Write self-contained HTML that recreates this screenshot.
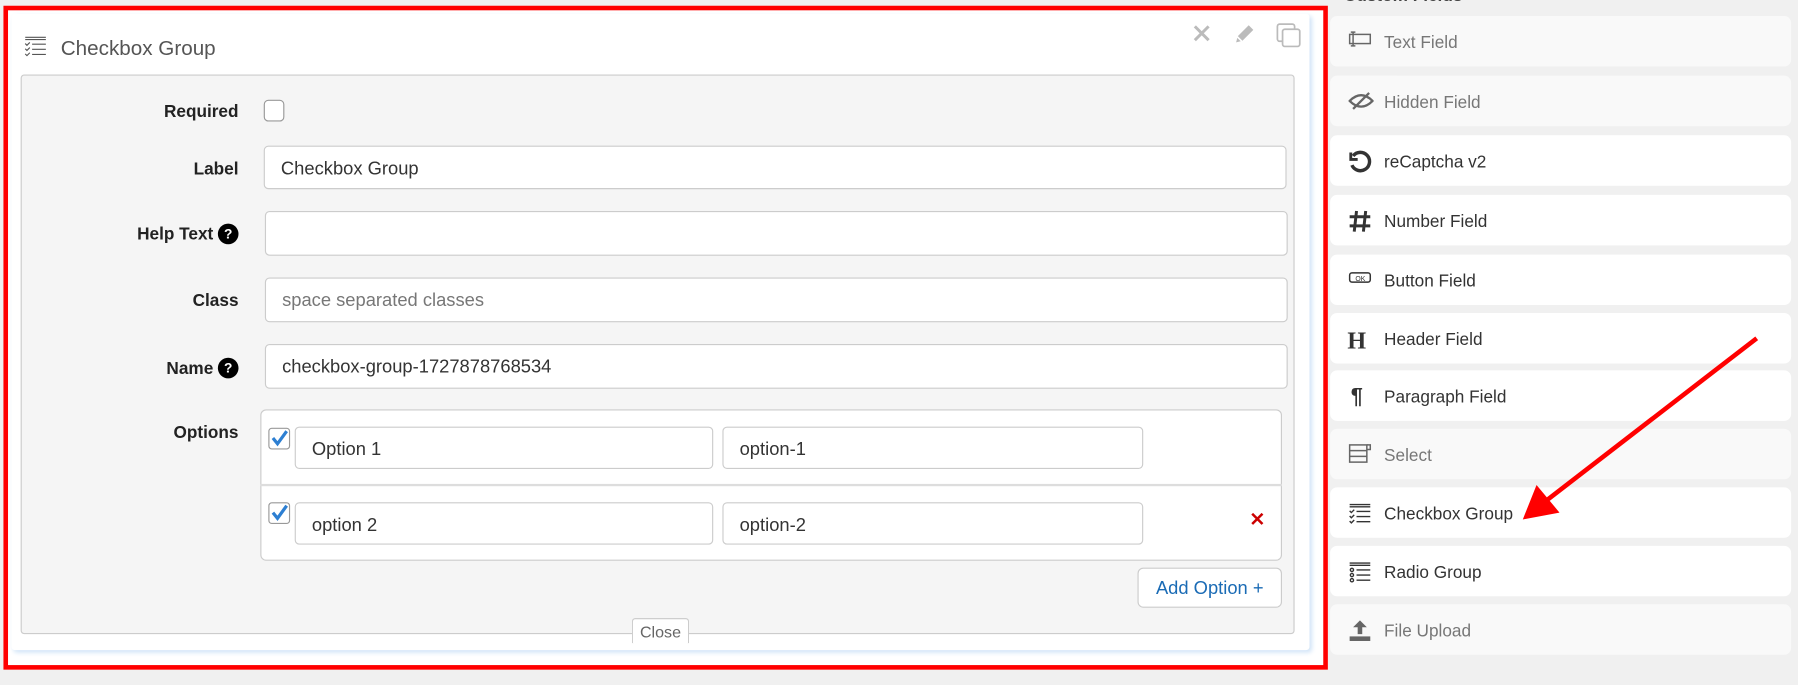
<!DOCTYPE html>
<html><head><meta charset="utf-8"><style>
html,body{margin:0;padding:0;width:1798px;height:685px;overflow:hidden;background:#f0f0f0;font-family:"Liberation Sans","DejaVu Sans",sans-serif}
#w{position:absolute;left:0;top:0;width:1568px;height:597px;transform:scale(1.14668);transform-origin:0 0}
.a{position:absolute}
.red{left:3px;top:5px;width:1147px;height:571px;border:4px solid #f00;background:#fff}
.card{left:10px;top:12px;width:1132px;height:555px;background:#fff;box-shadow:2px 2px 4px #cfe3f7;border-radius:3px}
.panel{left:18px;top:65px;width:1109px;height:486px;background:#f5f5f5;border:1px solid #ccc;border-radius:3px}
.lbl{font-weight:bold;font-size:15px;color:#222;text-align:right;width:190px;left:18px}
.inp{background:#fff;border:1px solid #ccc;border-radius:4px;box-sizing:border-box;font-size:16px;color:#333;padding-left:14px;line-height:39px}
.q{display:inline-block;width:18px;height:18px;border-radius:50%;background:#000;color:#fff;font-size:12px;text-align:center;line-height:18px;vertical-align:1px;margin-left:4px}
.cb{width:17px;height:17px;border:1px solid #999;border-radius:3px;background:#fff;box-sizing:border-box}
.it{left:1160px;width:402px;height:44px;border-radius:6px;background:#fff;font-size:15px;color:#333}
.it.l{background:#f9f9f9;color:#777}
.it span{position:absolute;left:47px;top:2px;line-height:44px}
.it svg{position:absolute;left:16px;top:13px}
</style></head><body><div id="w">
<div class="a" style="left:1172px;top:-12px;font-size:15px;font-weight:bold;color:#444">Custom Fields</div>
<div class="a red"></div>
<div class="a card"></div>
<svg class="a" style="left:21px;top:31px" width="20" height="20" viewBox="0 0 20 20" stroke="#555" fill="none" stroke-width="1"><path d="M1 1.5h18M1 3.5h18M7 7.5h12M7 12h12M7 16.5h12M1 7l1.5 1.5L5 6M1 11.5l1.5 1.5L5 10.5M1 16l1.5 1.5L5 15"/></svg>
<div class="a" style="left:53px;top:32px;font-size:18px;color:#555">Checkbox Group</div>
<svg class="a" style="left:1040px;top:21px" width="16" height="16" viewBox="0 0 16 16" stroke="#bbb" stroke-width="2.6"><path d="M2 2l12 12M14 2L2 14"/></svg>
<svg class="a" style="left:1077px;top:21px" width="17" height="17" viewBox="0 0 17 17" fill="#bbb"><path d="M12 1l4 4-9.5 9.5-4-4zM2 12l3 3-4 1z"/></svg>
<svg class="a" style="left:1113px;top:20px" width="22" height="22" viewBox="0 0 22 22" fill="none" stroke="#bbb" stroke-width="1.5"><rect x="1" y="1" width="15" height="15" rx="2"/><rect x="5.5" y="5.5" width="15" height="15" rx="2" fill="#fff"/></svg>
<div class="a panel"></div>
<div class="a lbl" style="top:89px">Required</div>
<div class="a cb" style="left:230px;top:87px;width:18px;height:19px;border-radius:4px"></div>
<div class="a lbl" style="top:139px">Label</div>
<div class="a inp" style="left:230px;top:127px;width:892px;height:38px">Checkbox Group</div>
<div class="a lbl" style="top:195px">Help Text<span class="q">?</span></div>
<div class="a inp" style="left:231px;top:184px;width:892px;height:39px"></div>
<div class="a lbl" style="top:254px">Class</div>
<div class="a inp" style="left:231px;top:242px;width:892px;height:39px;color:#777">space separated classes</div>
<div class="a lbl" style="top:312px">Name<span class="q">?</span></div>
<div class="a inp" style="left:231px;top:300px;width:892px;height:39px">checkbox-group-1727878768534</div>
<div class="a lbl" style="top:369px">Options</div>
<div class="a" style="left:227px;top:357px;width:891px;height:132px;border:1px solid #ccc;border-radius:5px;background:#fff;box-sizing:border-box"></div>
<div class="a" style="left:227px;top:422px;width:891px;height:2px;background:#ddd"></div>
<div class="a cb" style="left:234px;top:373px;width:19px;height:19px"></div>
<svg class="a" style="left:236px;top:374px" width="16" height="16" viewBox="0 0 16 16" fill="none" stroke="#2d7fd2" stroke-width="2.8"><path d="M2 8l4 5 8-11"/></svg>
<div class="a inp" style="left:257px;top:372px;width:365px;height:37px">Option 1</div>
<div class="a inp" style="left:630px;top:372px;width:367px;height:37px">option-1</div>
<div class="a cb" style="left:234px;top:438px;width:19px;height:19px"></div>
<svg class="a" style="left:236px;top:439px" width="16" height="16" viewBox="0 0 16 16" fill="none" stroke="#2d7fd2" stroke-width="2.8"><path d="M2 8l4 5 8-11"/></svg>
<div class="a inp" style="left:257px;top:438px;width:365px;height:37px">option 2</div>
<div class="a inp" style="left:630px;top:438px;width:367px;height:37px">option-2</div>
<svg class="a" style="left:1091px;top:447px" width="11" height="11" viewBox="0 0 11 11" stroke="#c00" stroke-width="2.2"><path d="M1 1l9 9M10 1L1 10"/></svg>
<div class="a" style="left:992px;top:495px;width:126px;height:35px;border:1px solid #ccc;border-radius:5px;background:#fff;box-sizing:border-box;color:#1a6bb5;font-size:16px;text-align:center;line-height:36px">Add Option +</div>
<div class="a" style="left:551px;top:539px;width:50px;height:22px;border:1px solid #ccc;border-bottom:none;border-radius:3px 3px 0 0;background:#fff;box-sizing:border-box;font-size:14px;color:#666;text-align:center;line-height:23px">Close</div>

<div class="a it l" style="top:14px"><svg width="20" height="16" viewBox="0 0 20 16" fill="none" stroke="#666" stroke-width="1.3"><rect x="1" y="3" width="18" height="8"/><path d="M4 1v12M2 1h4M2 13h4"/></svg><span>Text Field</span></div>
<div class="a it l" style="top:66px"><svg width="22" height="18" viewBox="0 0 22 18" fill="none" stroke="#666" stroke-width="2"><path d="M1 9q10-10 20 0q-10 10-20 0z"/><path d="M4 16L18 2"/></svg><span>Hidden Field</span></div>
<div class="a it" style="top:118px"><svg width="20" height="20" viewBox="0 0 20 20" fill="none" stroke="#333" stroke-width="3"><path d="M4 5a8 8 0 1 1-1 8"/><path d="M2 2v6h6" stroke-width="2.5"/></svg><span>reCaptcha v2</span></div>
<div class="a it" style="top:170px"><svg width="20" height="20" viewBox="0 0 20 20" stroke="#333" stroke-width="2.6"><path d="M7 1L5 19M15 1l-2 18M1 6h18M1 14h18"/></svg><span>Number Field</span></div>
<div class="a it" style="top:222px"><svg width="20" height="16" viewBox="0 0 20 16" fill="none" stroke="#333" stroke-width="1.3"><rect x="1" y="3" width="18" height="8" rx="2"/><text x="6" y="10" font-size="6" fill="#333" stroke="none" font-family="Liberation Sans">OK</text></svg><span>Button Field</span></div>
<div class="a it" style="top:273px"><span style="left:15px;font-family:'Liberation Serif',serif;font-weight:bold;font-size:21px;color:#333">H</span><span>Header Field</span></div>
<div class="a it" style="top:323px"><span style="left:18px;font-weight:bold;font-size:19px;color:#333">¶</span><span>Paragraph Field</span></div>
<div class="a it l" style="top:374px"><svg width="20" height="18" viewBox="0 0 20 18" fill="none" stroke="#666" stroke-width="1.3"><rect x="1" y="1" width="15" height="15"/><path d="M1 6h15M1 11h15M16 1h3v4h-3"/></svg><span>Select</span></div>
<div class="a it" style="top:425px"><svg width="20" height="20" viewBox="0 0 20 20" stroke="#333" fill="none" stroke-width="1.2"><path d="M1 2h18M1 4h18M7 8h12M7 12.5h12M7 17h12M1 7.5l1.5 1.5L5 6.5M1 12l1.5 1.5L5 11M1 16.5l1.5 1.5L5 15.5"/></svg><span>Checkbox Group</span></div>
<div class="a it" style="top:476px"><svg width="20" height="20" viewBox="0 0 20 20" stroke="#333" fill="none" stroke-width="1.2"><path d="M1 2h18M1 4h18M7 8h12M7 12.5h12M7 17h12"/><circle cx="3" cy="8" r="1.4"/><circle cx="3" cy="12.5" r="1.4"/><circle cx="3" cy="17" r="1.4"/></svg><span>Radio Group</span></div>
<div class="a it l" style="top:527px"><svg width="20" height="20" viewBox="0 0 20 20" fill="#666"><path d="M10 1l6 6h-4v6H8V7H4z"/><rect x="1" y="15" width="18" height="4"/></svg><span>File Upload</span></div>

<svg class="a" style="left:0;top:0" width="1568" height="597"><path d="M1532 295L1348 437" stroke="#f00" stroke-width="4"/><path d="M1328 453l12-30 20 24z" fill="#f00"/></svg>
</div></body></html>
